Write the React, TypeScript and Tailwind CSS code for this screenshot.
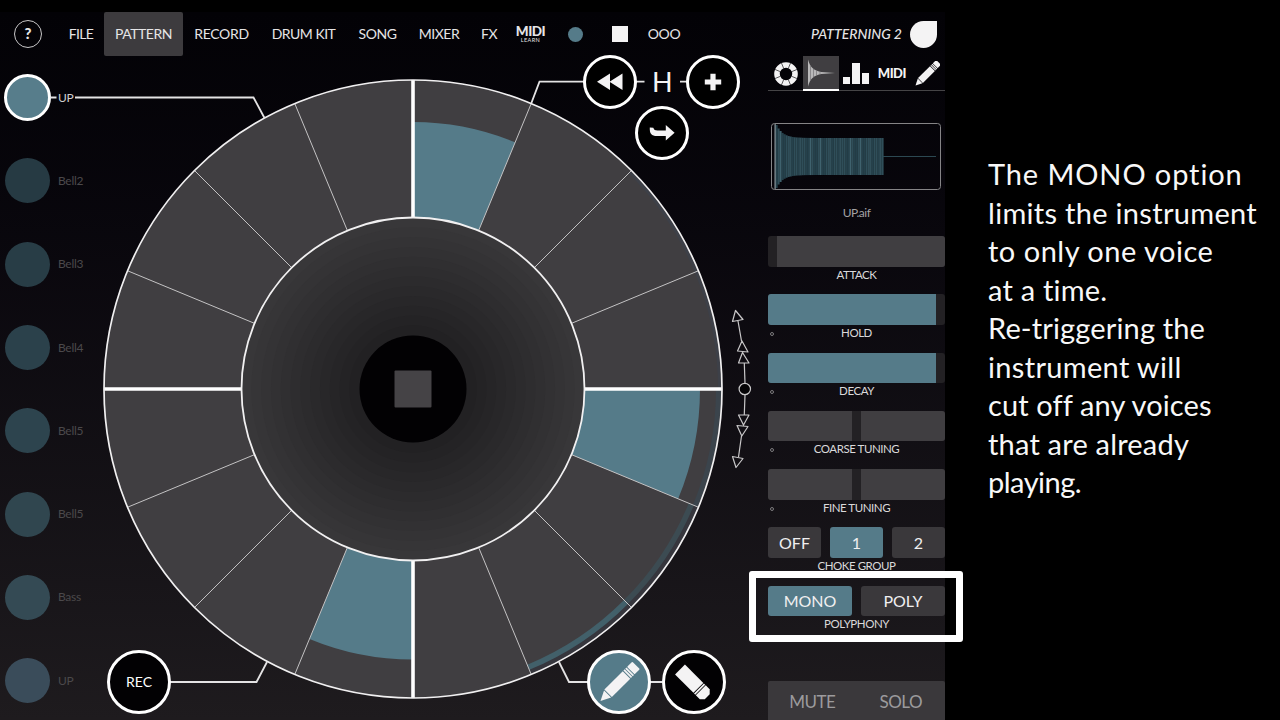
import { useState } from 'react';
import type { ReactNode } from 'react';
import clsx from 'clsx';

const CX = 413;
const CY = 389;
const OUTER = 309;
const INNER = 171.5;
const STEPS = 16;

const point = (radius: number, deg: number) => {
  const a = ((deg - 90) * Math.PI) / 180;
  return [CX + radius * Math.cos(a), CY + radius * Math.sin(a)];
};

const wedge = (r0: number, r1: number, from: number, to: number) => {
  const [ax, ay] = point(r1, from);
  const [bx, by] = point(r1, to);
  const [cx, cy] = point(r0, to);
  const [dx, dy] = point(r0, from);
  return `M${ax} ${ay} A${r1} ${r1} 0 0 1 ${bx} ${by} L${cx} ${cy} A${r0} ${r0} 0 0 0 ${dx} ${dy} Z`;
};

// step index and the radius it is filled to
const filled = [
  { step: 0, radius: 267 },
  { step: 4, radius: 287 },
  { step: 8, radius: 270.5 },
];

const navItems = [
  { name: 'FILE', css: 'w-[46px] tracking-[-0.6px]' },
  { name: 'PATTERN', css: 'w-[79px] tracking-[-0.5px]' },
  { name: 'RECORD', css: 'w-[77px] tracking-[-0.3px]' },
  { name: 'DRUM KIT', css: 'w-[87px] tracking-[-0.5px]' },
  { name: 'SONG', css: 'w-[61px] tracking-[-0.4px]' },
  { name: 'MIXER', css: 'w-[62px] tracking-[-0.5px]' },
  { name: 'FX', css: 'w-[38px] tracking-[-0.5px]' },
];

const pads = [
  { name: 'UP', color: 'bg-[#577d8b]' },
  { name: 'Bell2', color: 'bg-[#263a43]' },
  { name: 'Bell3', color: 'bg-[#283d46]' },
  { name: 'Bell4', color: 'bg-[#2b414b]' },
  { name: 'Bell5', color: 'bg-[#2d444e]' },
  { name: 'Bell5', color: 'bg-[#30464f]' },
  { name: 'Bass', color: 'bg-[#344a54]' },
  { name: 'UP', color: 'bg-[#3a4c5a]' },
];

const notes = [
  { text: 'The MONO option', css: 'tracking-[0.9px]' },
  { text: 'limits the instrument', css: 'tracking-[0.3px]' },
  { text: 'to only one voice', css: 'tracking-[0.5px]' },
  { text: 'at a time.', css: 'tracking-[0.2px]' },
  { text: 'Re-triggering the', css: 'tracking-[0.15px]' },
  { text: 'instrument will', css: 'tracking-[0.33px]' },
  { text: 'cut off any voices', css: 'tracking-[0.1px]' },
  { text: 'that are already', css: 'tracking-[0.2px]' },
  { text: 'playing.', css: 'tracking-[-0.5px]' },
];

const PencilShape = () => (
  <g fill="#f4f3f4">
    <path d="M0 0 L10 -5 V5 Z" />
    <rect x="10.8" y="-5.3" width="26" height="10.6" />
    <rect x="37.7" y="-5.3" width="1.8" height="10.6" />
    <rect x="40.3" y="-5.3" width="1.8" height="10.6" />
    <rect x="42.9" y="-5.3" width="7.4" height="10.6" rx="0.8" />
  </g>
);

const Wheel = () => (
  <svg viewBox="104 56 664 664" className="block h-[664px] w-[664px] overflow-visible" fill="none">
    {/* Connectors */}
    <g stroke="#e4e3e4" strokeWidth="1.8">
      <path d="M50 97.5 H56.5 M75 97.5 H253.5 L264.5 118" />
      <path d="M531 104 L539.5 81.7 H586" />
      <path d="M170 682 H256.5 L267 662" />
      <path d="M559 662 L569 682 H588 M650 682 H662" />
      <path d="M636 81.7 H644.5 M680 81.7 H688" />
    </g>

    <circle cx={CX} cy={CY} r={OUTER} fill="#403e41" />
    {filled.map(({ step, radius }) => (
      <path key={step} d={wedge(INNER, radius, step * 22.5, step * 22.5 + 22.5)} fill="#557b89" />
    ))}
    <path d={wedge(303, 308, 90, 112.5)} fill="#3b444c" />
    <path d={wedge(305, 308, 45, 90)} fill="#3d4048" />
    <path d={wedge(303.5, 308.5, 112.5, 157.5)} fill="#36363d" />
    <path d={wedge(298.5, 304, 112.5, 135)} fill="#3c4b52" />
    <path d={wedge(298.5, 304, 135, 157.5)} fill="#42606a" />

    {/* Spokes */}
    {Array.from({ length: STEPS }, (_, i) => {
      const [x1, y1] = point(INNER, i * 22.5);
      const [x2, y2] = point(OUTER, i * 22.5);
      const major = i % 4 === 0;
      return (
        <line
          key={i}
          x1={x1}
          y1={y1}
          x2={x2}
          y2={y2}
          stroke={major ? '#fff' : '#c4c3c4'}
          strokeWidth={major ? 3.6 : 1}
        />
      );
    })}
    <circle cx={CX} cy={CY} r={OUTER} stroke="#f1f0f1" strokeWidth="1.7" />

    {/* Hub */}
    {Array.from({ length: 12 }, (_, i) => {
      const v = 56 - i * 2;
      return <circle key={i} cx={CX} cy={CY} r={INNER - i * 9.8} fill={`rgb(${v},${v - 1},${v + 1})`} />;
    })}
    <circle cx={CX} cy={CY} r={INNER} stroke="#f1f0f1" strokeWidth="1.8" />
    <circle cx={CX} cy={CY} r="53.5" fill="#020103" />
    <rect x="394.5" y="370.5" width="37" height="37" rx="1" fill="#454346" />

    {/* Rotation scrubber */}
    <g stroke="#c9c8c9" strokeWidth="1.2" strokeLinejoin="round">
      <path d="M735.5 310.5 L732.5 321.5 L743 319.5 Z M738 321 L741.5 341" />
      <path d="M742 341 L737.5 351 L748 352 Z M742.5 352.5 L738.5 363 L749 363 Z" />
      <path d="M744.3 363 L745 383" />
      <circle cx="744.8" cy="389" r="5.7" fill="#050406" />
      <path d="M745 395 L744.3 414.5 M738.5 415 H749 L743.5 425 Z M737 425.5 L748 426.5 L741.8 436 Z" />
      <path d="M741.5 436 L738.5 457 M732.5 456.5 L743 458.5 L736 467.5 Z" />
    </g>
  </svg>
);

const RoundButton = ({ children, className }: { children: ReactNode; className: string }) => (
  <button
    className={clsx(
      'absolute flex items-center justify-center rounded-full border-[3px] border-white text-white',
      className
    )}
  >
    {children}
  </button>
);

const Waveform = () => (
  <svg viewBox="0 0 170 67" className="block h-[67px] w-[170px]">
    <rect x="0.5" y="0.5" width="169" height="66" rx="3" fill="none" stroke="#858486" />
    {Array.from({ length: 54 }, (_, i) => {
      const x = 4.5 + i * 2;
      const half = 18.5 + 13 * Math.exp(-i / 3.2);
      return (
        <g key={i}>
          <rect x={x} y={33.5 - half} width="2.1" height={half * 2} fill={i % 5 === 2 ? '#3f626e' : '#2f4e59'} />
          {(i * 7) % 4 < 2 && (
            <rect x={x + 1.2} y={33.5 - half} width="0.7" height={half * 2} fill="#13262e" />
          )}
        </g>
      );
    })}
    <rect x="3.5" y="1" width="1.2" height="65" fill="#8b9aa0" />
    <rect x="112" y="33" width="53" height="1" fill="#2c4852" />
  </svg>
);

const Control = ({ label, dot, children }: { label: string; dot?: boolean; children: ReactNode }) => (
  <div className="h-[58.25px]">
    {children}
    <div className="relative text-center text-[11.5px] leading-[15.5px] tracking-[-0.45px] text-[#dad9da]">
      {dot && <i className="absolute top-[7px] left-[2px] h-1 w-1 rounded-full border border-[#7c7b7d]" />}
      {label}
    </div>
  </div>
);

const Split = () => (
  <div className="flex h-[30.5px] overflow-hidden rounded-[3px] bg-[#232124]">
    <div className="flex-1 bg-[#403e41]" />
    <div className="w-[9px]" />
    <div className="flex-1 bg-[#403e41]" />
  </div>
);

const Choice = ({ name, active, onClick }: { name: string; active: boolean; onClick: () => void }) => (
  <button
    onClick={onClick}
    className={clsx(
      'h-[30.5px] flex-1 rounded-[3px] text-base text-[#f0eff0]',
      active ? 'bg-[#557b89]' : 'bg-[#3a383b]'
    )}
  >
    {name}
  </button>
);

export default function App() {
  const [choke, setChoke] = useState('1');
  const [voices, setVoices] = useState('MONO');

  return (
    <div className="flex h-[720px] w-[1280px] overflow-hidden bg-black pt-3 font-['Lato',sans-serif]">
      <div className="relative h-[708px] w-[945px] shrink-0 bg-linear-to-b from-[#030206] to-[#1e1b1e]">
        {/* Menu bar */}
        <header className="flex h-11 items-center text-sm text-[#e6e5e6]">
          <div className="flex w-[58px] shrink-0 pl-[14px]">
            <button className="flex h-7 w-7 items-center justify-center rounded-full border-[1.5px] border-[#c8c7c8] text-[15px] font-black">
              ?
            </button>
          </div>
          {navItems.map((item) => (
            <button
              key={item.name}
              className={clsx(
                'h-11 shrink-0 whitespace-nowrap',
                item.css,
                item.name === 'PATTERN' && 'rounded-[2px] bg-[#3d3b3e]'
              )}
            >
              {item.name}
            </button>
          ))}
          <div className="w-[45px] text-center">
            <div className="text-[13.5px] leading-[11px] font-black tracking-[-0.5px]">MIDI</div>
            <div className="text-[5.5px] leading-[6px] tracking-[0.4px]">LEARN</div>
          </div>
          <div className="flex w-[45px] justify-center">
            <div className="h-[15px] w-[15px] rounded-full bg-[#557b89]" />
          </div>
          <div className="flex w-11 justify-center">
            <div className="h-4 w-4 bg-[#f4f3f4]" />
          </div>
          <div className="w-11 text-center tracking-[-0.3px]">OOO</div>
          <div className="ml-auto pr-2 font-medium whitespace-nowrap italic">PATTERNING 2</div>
          <div className="mr-2 h-[27px] w-[27px] rounded-full rounded-tr-[1px] bg-[#f4f3f4]" />
        </header>

        <div className="flex h-[664px]">
          {/* Pads */}
          <div className="relative w-[104px] shrink-0">
            {pads.map((pad, i) => (
              <div key={i} className="flex h-[83.3px] items-center text-xs">
                <div className="flex w-[55px] justify-center">
                  <div
                    className={clsx(
                      'rounded-full',
                      pad.color,
                      i === 0 ? 'h-[47px] w-[47px] border-[3px] border-white' : 'h-[45px] w-[45px]'
                    )}
                  />
                </div>
                <span
                  className={clsx(
                    'pl-[3px] tracking-[-0.3px]',
                    i === 0 ? 'text-[#d0cfd0]' : 'text-[#4b494b]'
                  )}
                >
                  {pad.name}
                </span>
              </div>
            ))}
          </div>

          {/* Stage */}
          <div className="relative w-[664px] shrink-0">
            <Wheel />
            <RoundButton className="top-[-1px] left-[479px] h-[54px] w-[54px] bg-black">
              <svg viewBox="0 0 26 18" className="h-[18px] w-[26px]" fill="#f4f3f4">
                <path d="M13 0.5 V17 L0 8.7 Z M25.5 0.5 V17 L12.5 8.7 Z" />
              </svg>
            </RoundButton>
            <span className="absolute top-[12px] left-[548px] w-5 text-center text-[27px] leading-[28px] text-[#f4f3f4]">
              H
            </span>
            <RoundButton className="top-[-1px] left-[582px] h-[54px] w-[54px] bg-black">
              <svg viewBox="0 0 18 18" className="h-[18px] w-[18px]" stroke="#f4f3f4" strokeWidth="5.2">
                <path d="M9 0.8 V17.2 M0.8 9 H17.2" />
              </svg>
            </RoundButton>
            <RoundButton className="top-[50px] left-[531px] h-[54px] w-[54px] bg-black">
              <svg viewBox="0 0 26 18" className="h-[18px] w-[26px]" fill="#f4f3f4">
                <path d="M0.8 3.4 L4.3 3.8 C5 6 6 6.5 8.5 6.5 H16.8 V1 L25.6 8.7 L16.8 16.6 V12 H8 C2.5 12 0.5 9.5 0.8 3.4 Z" />
              </svg>
            </RoundButton>
            <RoundButton className="top-[594px] left-[3px] h-[64px] w-[64px] bg-[#020103] text-sm">
              REC
            </RoundButton>
            <RoundButton className="top-[594px] left-[483px] h-[64px] w-[64px] bg-[#557b89]">
              <svg viewBox="0 0 58 58" className="h-[58px] w-[58px] shrink-0">
                <g transform="translate(10.5 48) rotate(-45)">
                  <PencilShape />
                </g>
              </svg>
            </RoundButton>
            <RoundButton className="top-[594px] left-[558px] h-[64px] w-[64px] bg-[#020103]">
              <svg viewBox="0 0 58 58" className="h-[58px] w-[58px] shrink-0">
                <g transform="translate(15 16.5) rotate(45)" fill="#f4f3f4">
                  <rect x="0" y="-7" width="26" height="14" />
                  <rect x="26.8" y="-7" width="1.8" height="14" />
                  <path d="M29.4 -7 H35 L38.5 -3.5 V3.5 L35 7 H29.4 Z" />
                </g>
              </svg>
            </RoundButton>
          </div>

          {/* Instrument panel */}
          <div className="flex w-[177px] shrink-0 flex-col">
            <div className="grid h-[35px] grid-cols-5 border-b border-[#454446]">
              <div className="flex items-center justify-center">
                <svg viewBox="-12 -12 24 24" className="h-6 w-6" fill="none">
                  <circle r="9" stroke="#f4f3f4" strokeWidth="5.6" />
                  {Array.from({ length: 8 }, (_, i) => (
                    <line
                      key={i}
                      y1="-6"
                      y2="-12"
                      stroke="#0a090c"
                      strokeWidth="0.6"
                      transform={`rotate(${i * 45 + 22.5})`}
                    />
                  ))}
                </svg>
              </div>
              <div className="flex h-[35px] items-center justify-center border-b-2 border-white bg-[#403e41]">
                <svg viewBox="0 0 28 28" className="h-7 w-7">
                  <path d="M1 0.5 C3 8 6 11 14 13 L28 14 L14 15 C6 17 3 20 1 27.5 Z" fill="#b9b8b9" />
                  <path d="M3.5 7 V21 M6.5 9.5 V18.5 M9.5 11 V17 M13 12 V16" stroke="#6a686b" strokeWidth="0.6" />
                </svg>
              </div>
              <div className="flex items-end justify-center gap-[2px] pb-[7px]">
                <div className="h-[7px] w-[7px] bg-[#f4f3f4]" />
                <div className="h-[21px] w-2 bg-[#f4f3f4]" />
                <div className="h-[11px] w-[7px] bg-[#f4f3f4]" />
              </div>
              <div className="flex items-center justify-center text-[13px] font-black tracking-[-0.5px] text-[#f4f3f4]">
                MIDI
              </div>
              <div className="flex items-center justify-center">
                <svg viewBox="0 0 26 26" className="h-[26px] w-[26px] shrink-0">
                  <g transform="translate(1.5 24.5) rotate(-45) scale(0.65)">
                    <PencilShape />
                  </g>
                </svg>
              </div>
            </div>

            <div className="mt-8 pl-[3px]">
              <Waveform />
            </div>
            <div className="mt-[14px] mb-[14px] text-center text-xs leading-[18px] tracking-[-0.5px] text-[#a3a2a4]">
              UP.aif
            </div>

            <Control label="ATTACK">
              <div className="flex h-[30.5px] justify-end overflow-hidden rounded-[3px] bg-[#232124]">
                <div className="w-[168px] bg-[#403e41]" />
              </div>
            </Control>
            {['HOLD', 'DECAY'].map((name) => (
              <Control key={name} label={name} dot>
                <div className="h-[30.5px] overflow-hidden rounded-[3px] bg-[#232124]">
                  <div className="h-full w-[168px] bg-[#557b89]" />
                </div>
              </Control>
            ))}
            <Control label="COARSE TUNING" dot>
              <Split />
            </Control>
            <Control label="FINE TUNING" dot>
              <Split />
            </Control>
            <Control label="CHOKE GROUP">
              <div className="flex gap-[9px]">
                {['OFF', '1', '2'].map((name) => (
                  <Choice key={name} name={name} active={choke === name} onClick={() => setChoke(name)} />
                ))}
              </div>
            </Control>
            <Control label="POLYPHONY">
              <div className="flex gap-[9px]">
                {['MONO', 'POLY'].map((name) => (
                  <Choice key={name} name={name} active={voices === name} onClick={() => setVoices(name)} />
                ))}
              </div>
            </Control>

            <div className="mt-auto grid h-[39px] shrink-0 grid-cols-2 items-center rounded-t-[2px] bg-[#3a383b] pt-[3px] text-center text-[17px] tracking-[-0.5px] text-[#9c9b9d]">
              <span>MUTE</span>
              <span>SOLO</span>
            </div>
          </div>
        </div>

        {/* Callout frame */}
        <div className="pointer-events-none absolute top-[559px] left-[749px] h-[71px] w-[214px] rounded-[3px] border-[7px] border-white" />
      </div>

      <aside className="pt-[143px] pl-[43px] text-[29px] leading-[38.55px] whitespace-nowrap text-[#f8f8f8]">
        {notes.map((line) => (
          <p key={line.text} className={line.css}>
            {line.text}
          </p>
        ))}
      </aside>
    </div>
  );
}
